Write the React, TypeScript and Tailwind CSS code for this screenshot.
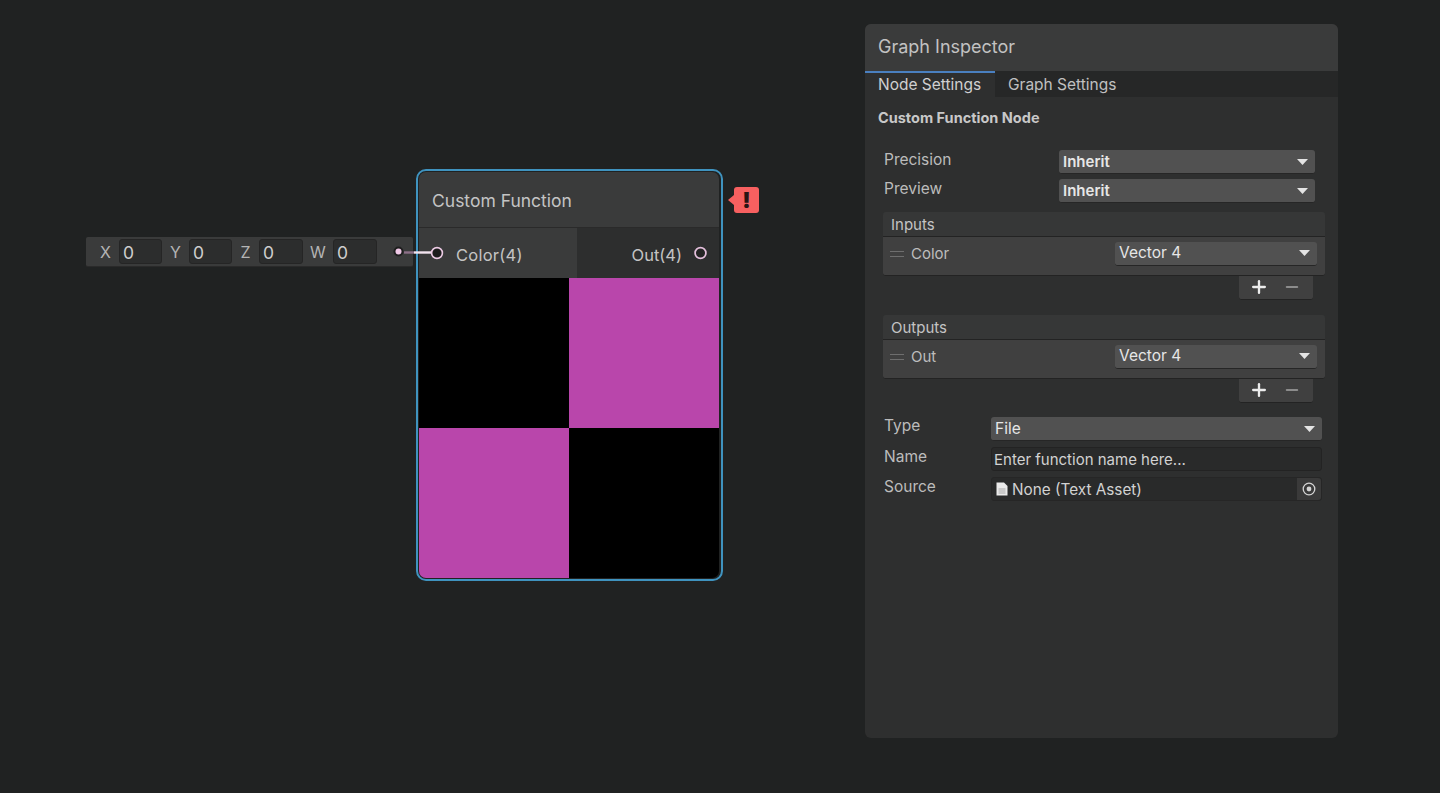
import { Plus, Minus } from "lucide-react"

const font = "font-['Inter','Noto_Sans',sans-serif]"

function Caret() {
  return (
    <svg width="11" height="6" viewBox="0 0 11 6" className="shrink-0">
      <path d="M0 0 H11 L5.5 6 Z" fill="#e4e4e4" />
    </svg>
  )
}

function Dropdown({ label, className, bold }: { label: string; className: string; bold?: boolean }) {
  return (
    <div
      className={`flex items-center justify-between h-[24px] pl-1 pr-[7px] rounded-[3px] bg-[#515151] border-b border-[#262626] text-[#e6e6e6] ${bold ? "text-[15px] font-semibold" : "text-[15.5px]"} ${className}`}
    >
      <span className={bold ? "pt-[2px]" : ""}>{label}</span>
      <Caret />
    </div>
  )
}

function AxisField({ axis, labelWidth, fieldWidth }: { axis: string; labelWidth: string; fieldWidth: string }) {
  return (
    <div className="flex items-center">
      <span className={`${labelWidth} text-center text-[16px] text-[#b4b4b4]`}>{axis}</span>
      <div className={`${fieldWidth} h-[25px] pl-[3px] rounded-[3px] bg-[#2c2d2d] border border-[#252525] text-[17.5px] leading-[25px] text-[#cfcfcf]`}>
        0
      </div>
    </div>
  )
}

function ReorderList({ title, row }: { title: string; row: string }) {
  return (
    <div className="ml-[18px] mr-[13px]">
      <div className="h-[25px] pl-[8px] rounded-t-[3px] bg-[#363737] border-b border-[#232323] text-[15px] leading-[26px] text-[#c4c4c4]">
        {title}
      </div>
      <div className="flex items-center justify-between h-[39px] pb-[5px] pl-[7px] pr-[8px] rounded-b-[3px] bg-[#404040] border-b border-[#232323]">
        <div className="flex items-center gap-[7px]">
          <div className="flex flex-col gap-[4px] w-[14px]">
            <div className="h-px bg-[#6e6e6e]" />
            <div className="h-px bg-[#6e6e6e]" />
          </div>
          <span className="pt-[2px] text-[15px] text-[#bdbdbd]">{row}</span>
        </div>
        <Dropdown label="Vector 4" className="w-[202px] h-[22px]" />
      </div>
      <div className="flex justify-end pr-[12px]">
        <div className="flex items-center gap-[14px] w-[74px] h-[24px] pb-[2px] pl-[10px] rounded-b-[3px] bg-[#404040] border-b border-[#232323]">
          <Plus size={20} strokeWidth={2.8} color="#ececec" />
          <Minus size={18} strokeWidth={2.6} color="#8c8c8c" />
        </div>
      </div>
    </div>
  )
}

function Inspector() {
  return (
    <div className="absolute left-[865px] top-[24px] w-[473px] h-[714px] rounded-[6px] overflow-hidden bg-[#2e2f2f]">
      <div className="h-[47px] pl-[13px] bg-[#3a3b3b] text-[18px] leading-[46px] text-[#c2c2c2]">Graph Inspector</div>

      <div className="flex h-[26px] bg-[#262727] text-[15.5px] leading-[27px]">
        <div className="w-[130px] pl-[13px] bg-[#2e2f2f] border-t-2 border-[#4a80c0] text-[#d0d0d0] leading-[24px]">Node Settings</div>
        <div className="pl-[13px] text-[#c0c0c0]">Graph Settings</div>
      </div>

      <div className="pl-[13px] pt-[11px] h-[47px] text-[14.5px] leading-[20px] font-bold text-[#c8c8c8]">Custom Function Node</div>

      <div className="flex flex-col gap-[5px] ml-[18px] mr-[23px] mt-[6px]">
        <div className="flex items-start">
          <span className="w-[176px] pl-px text-[15.5px] leading-[19px] text-[#bcbcbc]">Precision</span>
          <Dropdown label="Inherit" bold className="flex-1" />
        </div>
        <div className="flex items-start">
          <span className="w-[176px] pl-px text-[15.5px] leading-[19px] text-[#bcbcbc]">Preview</span>
          <Dropdown label="Inherit" bold className="flex-1" />
        </div>
      </div>

      <div className="flex flex-col gap-[15px] mt-[9px]">
        <ReorderList title="Inputs" row="Color" />
        <ReorderList title="Outputs" row="Out" />
      </div>

      <div className="flex flex-col ml-[18px] mr-[16px] mt-[14px]">
        <div className="flex items-start h-[30px]">
          <span className="w-[108px] pl-px text-[15.5px] leading-[18px] text-[#bcbcbc]">Type</span>
          <Dropdown label="File" className="flex-1" />
        </div>
        <div className="flex items-start h-[30px]">
          <span className="w-[108px] pl-px text-[15.5px] leading-[20px] text-[#bcbcbc]">Name</span>
          <div className="flex-1 h-[24px] pl-[2px] rounded-[3px] bg-[#292a2a] border border-[#232323] text-[15px] leading-[23px] text-[#d2d2d2]">
            Enter function name here...
          </div>
        </div>
        <div className="flex items-start h-[25px]">
          <span className="w-[108px] pl-px text-[15.5px] leading-[20px] text-[#bcbcbc]">Source</span>
          <div className="flex-1 flex items-center justify-between h-[24px] pl-[4px] rounded-[3px] bg-[#292a2a] border border-[#262626] text-[15.3px] text-[#d2d2d2]">
            <div className="flex items-center gap-[4px]">
              <svg width="12" height="14" viewBox="0 0 12 14">
                <path d="M0.5 0.5 H8 L11.5 4 V13.5 H0.5 Z" fill="#eaeaea" />
                <path d="M2.5 7 H9.5 M2.5 9 H9.5 M2.5 11 H9.5" stroke="#a8a8a8" strokeWidth="1" />
              </svg>
              <span className="pt-[2px]">None (Text Asset)</span>
            </div>
            <div className="flex items-center justify-center w-[24px] h-[22px] bg-[#3a3a3a] rounded-r-[3px]">
              <svg width="14" height="14" viewBox="0 0 14 14">
                <circle cx="7" cy="7" r="5.8" fill="none" stroke="#d4d4d4" strokeWidth="1.3" />
                <circle cx="7" cy="7" r="2.4" fill="#d4d4d4" />
              </svg>
            </div>
          </div>
        </div>
      </div>
    </div>
  )
}

function Node() {
  return (
    <div className="absolute left-[416px] top-[169px] w-[307px] h-[412px] rounded-[10px] border-2 border-[#3f93bf] p-px bg-[#202222]">
      <div className="w-[300px] h-[406px] rounded-[7px] overflow-hidden">
        <div className="h-[56px] pl-[13px] bg-[#3a3b3b] border-b border-[#2a2a2a] text-[17.5px] leading-[57px] text-[#c4c4c4]">Custom Function</div>
        <div className="flex h-[50px]">
          <div className="w-[158px] pl-[37px] bg-[#3a3b3b] text-[16.5px] tracking-[0.25px] leading-[54px] text-[#c4c4c4]">Color(4)</div>
          <div className="flex-1 pr-[37px] bg-[#2d2e2e] text-right text-[16.5px] leading-[54px] text-[#c4c4c4]">Out(4)</div>
        </div>
        <div className="grid grid-cols-2 grid-rows-2 h-[300px]">
          <div className="bg-black" />
          <div className="bg-[#b946ab]" />
          <div className="bg-[#b946ab]" />
          <div className="bg-black" />
        </div>
      </div>
    </div>
  )
}

export default function App() {
  return (
    <div className={`relative w-[1440px] h-[793px] overflow-hidden bg-[#202222] ${font}`}>
      {/* input vector control */}
      <div className="absolute left-[86px] top-[237px] flex items-center w-[327px] h-[30px] bg-[#3a3b3b] rounded-[2px] border-b border-[#2a2a2a]">
        <AxisField axis="X" labelWidth="w-[33px] pl-[6px]" fieldWidth="w-[43px]" />
        <AxisField axis="Y" labelWidth="w-[27px]" fieldWidth="w-[43px]" />
        <AxisField axis="Z" labelWidth="w-[27px]" fieldWidth="w-[44px]" />
        <AxisField axis="W" labelWidth="w-[30px]" fieldWidth="w-[44px]" />
      </div>

      <Node />

      {/* port connection + pins, sit over the node */}
      <svg className="absolute left-[390px] top-[240px]" width="60" height="26" viewBox="0 0 60 26">
        <circle cx="8.5" cy="11.5" r="5" fill="#1e1e1e" />
        <circle cx="8.5" cy="11.5" r="3" fill="#efc8e6" />
        <path d="M14 12.5 H24" stroke="#8d7088" strokeWidth="2.4" />
        <path d="M24 12.5 H42" stroke="#f2e4ef" strokeWidth="2.4" />
        <circle cx="47" cy="13" r="5.4" fill="#1c1c1c" stroke="#eccbe4" strokeWidth="1.6" />
      </svg>
      <svg className="absolute left-[692px] top-[245px]" width="16" height="16" viewBox="0 0 16 16">
        <circle cx="8.5" cy="8" r="5.4" fill="#242424" stroke="#e3bfdb" strokeWidth="1.7" />
      </svg>

      {/* error badge */}
      <div className="absolute left-[728px] top-[187px] flex items-center">
        <div className="w-0 h-0 border-y-[5px] border-y-transparent border-r-[6px] border-r-[#f76060]" />
        <div className="flex items-center justify-center w-[25px] h-[26px] rounded-[3px] bg-[#f76060]">
          <span className="text-[22px] leading-none font-black text-[#2a1414]">!</span>
        </div>
      </div>

      <Inspector />
    </div>
  )
}
